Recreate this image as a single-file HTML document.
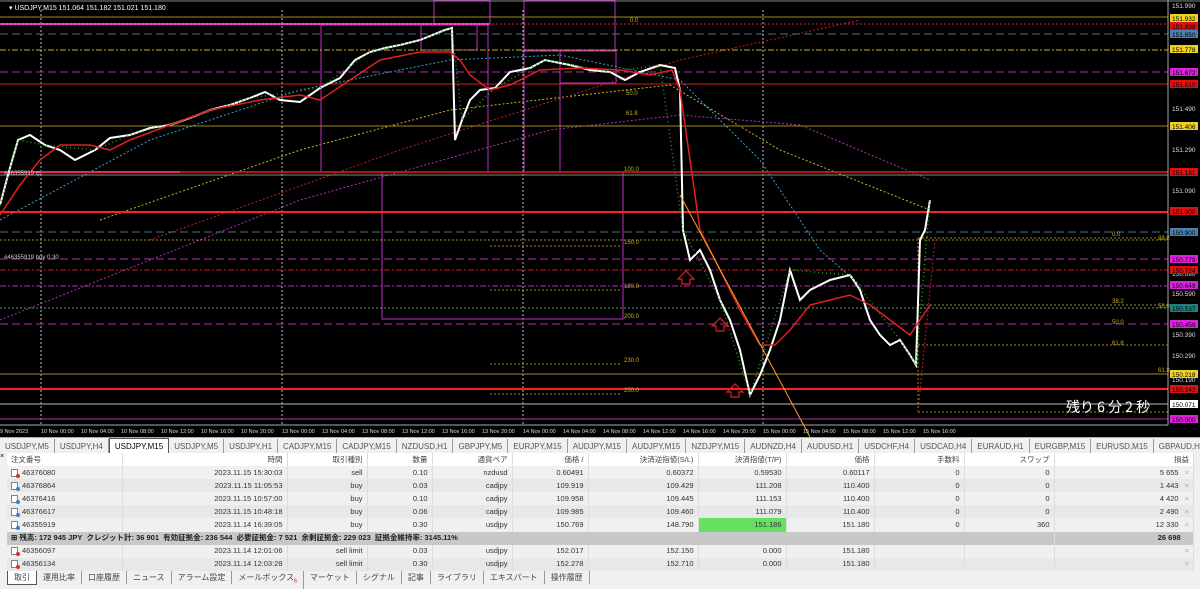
<!DOCTYPE html>
<html><head><meta charset="utf-8"><style>
*{margin:0;padding:0;box-sizing:border-box}
body{width:1200px;height:589px;overflow:hidden;background:#f0f0f0;font-family:"Liberation Sans","Noto Sans CJK JP",sans-serif;position:relative}
#chart{position:absolute;left:0;top:0;width:1200px;height:437px;background:#000}
.tabs{position:absolute;left:0;top:437px;width:1200px;height:16px;background:#f0f0f0;font-size:8px;color:#555;white-space:nowrap;border-top:1px solid #aaa;overflow:hidden}
.tabs span{display:inline-block;padding:2px 5px;border-right:1px solid #999;line-height:11px}
.tabs span.a{background:#fff;color:#000;border:1px solid #555;border-bottom:none}
table{position:absolute;left:7px;top:453px;width:1187px;border-collapse:collapse;font-size:7.5px;color:#333;table-layout:fixed}
td{height:13.1px;line-height:12px;padding:0 4px;text-align:right;border-right:1px solid #ddd;white-space:nowrap;overflow:hidden}
tr.g td{background:#e8e8e8}
tr.h td{background:#fff;color:#444}
tr.bal td{background:#c8c8c8;font-weight:bold;color:#222}
td.l{text-align:left}
.ic{display:inline-block;width:7px;height:8px;border:1px solid #789;background:#fff;vertical-align:middle;margin-right:4px;position:relative}
.ic:after{content:"";position:absolute;right:-3px;bottom:-2px;width:4px;height:4px;border-radius:50%;background:#c33}
.ic.b:after{background:#3a7fd0}
.x{color:#aaa;margin-left:6px}
.btabs{position:absolute;left:7px;top:571px;height:15px;font-size:8px;color:#444;white-space:nowrap;background:#f0f0f0}
.btabs span{display:inline-block;padding:1px 6px;border-right:1px solid #999;line-height:11px}
.btabs span.a{background:#fff;border:1px solid #555;border-top:none}
</style></head><body>
<div id="chart">
<svg width="1200" height="437" xmlns="http://www.w3.org/2000/svg" font-family="Liberation Sans, sans-serif">
<rect x="0" y="0" width="1200" height="437" fill="#000"/>
<g stroke="#bbb" stroke-dasharray="2,2" stroke-width="1">
<line x1="41" y1="10" x2="41" y2="425"/><line x1="282" y1="10" x2="282" y2="425"/><line x1="523" y1="10" x2="523" y2="425"/><line x1="763" y1="10" x2="763" y2="425"/>
</g>
<polyline points="0,220 150,140 300,90 450,60 560,55" fill="none" stroke="#3aa0d0" stroke-width="1" stroke-dasharray="2,2"/>
<polyline points="560,55 680,80 760,160 820,250 860,285" fill="none" stroke="#3aa0d0" stroke-width="1" stroke-dasharray="2,2"/>
<polyline points="100,220 300,150 450,110 670,85 780,150 930,210" fill="none" stroke="#c8b820" stroke-width="1" stroke-dasharray="2,2"/>
<polyline points="150,240 400,150 680,60 860,20" fill="none" stroke="#c02020" stroke-width="1" stroke-dasharray="2,2"/>
<polyline points="0,320 300,200 550,130 680,115 800,125 930,180" fill="none" stroke="#b030b0" stroke-width="1" stroke-dasharray="2,2"/>
<g fill="none" stroke="#c030c0" stroke-width="1">
<rect x="321" y="25" width="167" height="147"/><rect x="434" y="0" width="56" height="24"/><rect x="421" y="25" width="56" height="25"/>
<rect x="524" y="0" width="91" height="50"/><rect x="524" y="51" width="36" height="121"/><rect x="560" y="51" width="56" height="32"/>
<rect x="382" y="172" width="241" height="147"/>
</g>
<line x1="0" y1="24" x2="490" y2="24" stroke="#ff40ff" stroke-width="2"/>
<line x1="0" y1="172" x2="180" y2="172" stroke="#ff40ff" stroke-width="2"/>
<g fill="none">
<line x1="0" y1="17" x2="1168" y2="17" stroke="#a08a20"/>
<line x1="0" y1="24" x2="1168" y2="24" stroke="#e02020" stroke-dasharray="2,2"/>
<line x1="0" y1="34" x2="1168" y2="34" stroke="#4a7090" stroke-dasharray="8,4"/>
<line x1="0" y1="50" x2="1168" y2="50" stroke="#c8b020" stroke-dasharray="6,2,2,2"/>
<line x1="0" y1="72" x2="1168" y2="72" stroke="#b030b0" stroke-dasharray="8,4"/>
<line x1="0" y1="84" x2="1168" y2="84" stroke="#d02020"/>
<line x1="0" y1="126" x2="1168" y2="126" stroke="#a08a20"/>
<line x1="0" y1="172" x2="1168" y2="172" stroke="#e02020" stroke-width="1.5"/>
<line x1="0" y1="175" x2="1168" y2="175" stroke="#888"/>
<line x1="0" y1="212" x2="1168" y2="212" stroke="#ff2020" stroke-width="2"/>
<line x1="0" y1="232" x2="1168" y2="232" stroke="#4a7090" stroke-dasharray="8,4"/>
<line x1="0" y1="240" x2="1168" y2="240" stroke="#a08a20" stroke-dasharray="2,2"/>
<line x1="0" y1="259" x2="1168" y2="259" stroke="#b030b0" stroke-dasharray="8,4"/>
<line x1="0" y1="270" x2="1168" y2="270" stroke="#c02020" stroke-dasharray="6,2,2,2"/>
<line x1="0" y1="286" x2="1168" y2="286" stroke="#b030b0" stroke-dasharray="6,2,2,2"/>
<line x1="0" y1="308" x2="1168" y2="308" stroke="#50a080" stroke-dasharray="2,2"/>
<line x1="0" y1="324" x2="1168" y2="324" stroke="#b030b0" stroke-dasharray="8,4"/>
<line x1="0" y1="374" x2="1168" y2="374" stroke="#a08a20"/>
<line x1="0" y1="389" x2="1168" y2="389" stroke="#ff2020" stroke-width="2"/>
<line x1="0" y1="404" x2="1168" y2="404" stroke="#bbb"/>
<line x1="0" y1="419" x2="1168" y2="419" stroke="#b030b0"/>
</g>
<g font-size="6" fill="#c8b020">
<text x="630" y="22">0.0</text><text x="626" y="95">50.0</text><text x="626" y="115">61.8</text><text x="624" y="171">100.0</text>
<text x="624" y="244">150.0</text><text x="624" y="288">180.0</text><text x="624" y="318">200.0</text><text x="624" y="362">230.0</text><text x="624" y="392">250.0</text>
<text x="1112" y="236">0.0</text><text x="1158" y="240">38.2</text><text x="1112" y="303">38.2</text><text x="1158" y="308">50.0</text><text x="1112" y="324">50.0</text><text x="1112" y="345">61.8</text><text x="1158" y="372">61.8</text>
</g>
<g stroke="#a08a20" stroke-dasharray="2,2"><line x1="490" y1="246" x2="622" y2="246"/><line x1="490" y1="290" x2="622" y2="290"/><line x1="490" y1="364" x2="622" y2="364"/><line x1="490" y1="394" x2="622" y2="394"/><line x1="918" y1="238" x2="1168" y2="238"/><line x1="918" y1="305" x2="1168" y2="305"/><line x1="918" y1="345" x2="1168" y2="345"/><line x1="918" y1="412" x2="1168" y2="412"/></g>
<line x1="918" y1="238" x2="918" y2="412" stroke="#a08a20" stroke-dasharray="2,2"/>
<line x1="918" y1="412" x2="935" y2="240" stroke="#c02020" stroke-dasharray="2,2"/>
<polyline points="0,205 8,175 18,140 30,135 45,145 60,150 75,160 95,150 110,138 130,135 150,128 170,125 190,118 210,110 230,105 250,98 265,92 280,100 300,102 320,88 340,78 355,60 370,52 385,48 400,45 420,40 445,30 452,28 455,140 462,120 470,100 480,90 495,88 510,72 530,68 545,60 570,65 590,70 610,72 625,80 640,72 660,65 675,68 680,90 683,230 690,260 700,250 710,270 720,300 730,320 740,350 750,395 760,375 770,350 780,320 790,270 800,300 810,290 830,280 850,275 860,290 870,320 880,335 890,345 900,340 910,355 916,365 920,240 925,230 930,200" fill="none" stroke="#fff" stroke-width="2"/>
<polyline points="0,205 18,140 45,145 95,150 130,135 190,118 250,98 320,88 370,52 420,40 452,28 462,120 495,88 545,60 610,72 660,65 683,230 720,300 750,395 790,270 850,275 900,340 916,365 930,200" fill="none" stroke="#2a9a20" stroke-width="1.5" stroke-dasharray="1,3"/>
<polyline points="0,215 20,185 40,160 60,145 90,145 110,150 130,140 170,125 210,110 260,100 300,95 320,100 350,80 380,60 420,52 450,52 460,60 470,75 490,90 510,85 540,70 580,68 620,70 650,75 672,70 680,90 690,160 700,230 720,270 740,310 760,345 775,345 790,330 810,305 830,300 850,295 870,305 890,320 910,335 920,320 930,305" fill="none" stroke="#e02020" stroke-width="1.5"/>
<line x1="680" y1="195" x2="810" y2="437" stroke="#ffa020" stroke-width="1"/>
<g fill="none" stroke="#e02020" stroke-width="1.2">
<path d="M682,284 v-5 h-4 l8,-8 l8,8 h-4 v5 z"/><path d="M716,331 v-5 h-4 l8,-8 l8,8 h-4 v5 z"/><path d="M731,397 v-5 h-4 l8,-8 l8,8 h-4 v5 z"/>
</g>
<line x1="0" y1="1" x2="1200" y2="1" stroke="#888"/>
<text x="9" y="10" font-size="7" fill="#fff">▾ USDJPY,M15  151.064 151.182 151.021 151.180</text>
<text x="4" y="175" font-size="6" fill="#ccc">#46355919 tp</text>
<text x="4" y="259" font-size="6" fill="#ccc">#46355919 buy 0.30</text>
<text x="1066" y="412" font-size="14" fill="#fff" font-family="Noto Sans CJK JP, sans-serif">残り 6 分 2 秒</text>
<line x1="1168" y1="0" x2="1168" y2="425" stroke="#aaa"/>
<line x1="0" y1="425" x2="1168" y2="425" stroke="#aaa"/>
<g font-size="6.5" fill="#ddd">
<text x="1172" y="8">151.990</text><text x="1172" y="111">151.490</text><text x="1172" y="152">151.290</text><text x="1172" y="193">151.090</text>
<text x="1172" y="276">150.690</text><text x="1172" y="296">150.590</text><text x="1172" y="337">150.390</text><text x="1172" y="358">150.290</text><text x="1172" y="382">150.190</text>
</g>
<g font-size="6.5">
<rect x="1170" y="14" width="28" height="8" fill="#f0d020"/><text x="1172" y="21" fill="#000">151.932</text>
<rect x="1170" y="22" width="28" height="8" fill="#e01010"/><text x="1172" y="29" fill="#000">151.898</text>
<rect x="1170" y="30" width="28" height="8" fill="#4a80b0"/><text x="1172" y="37" fill="#000">151.850</text>
<rect x="1170" y="45" width="28" height="8" fill="#f0d020"/><text x="1172" y="52" fill="#000">151.778</text>
<rect x="1170" y="68" width="28" height="8" fill="#e020e0"/><text x="1172" y="75" fill="#000">151.672</text>
<rect x="1170" y="80" width="28" height="8" fill="#e01010"/><text x="1172" y="87" fill="#000">151.610</text>
<rect x="1170" y="122" width="28" height="8" fill="#f0d020"/><text x="1172" y="129" fill="#000">151.406</text>
<rect x="1170" y="168" width="28" height="8" fill="#e01010"/><text x="1172" y="175" fill="#000">151.181</text>
<rect x="1170" y="207" width="28" height="8" fill="#e01010"/><text x="1172" y="214" fill="#000">151.000</text>
<rect x="1170" y="228" width="28" height="8" fill="#4a80b0"/><text x="1172" y="235" fill="#000">150.900</text>
<rect x="1170" y="255" width="28" height="8" fill="#e020e0"/><text x="1172" y="262" fill="#000">150.779</text>
<rect x="1170" y="266" width="28" height="8" fill="#e01010"/><text x="1172" y="273" fill="#000">150.724</text>
<rect x="1170" y="281" width="28" height="8" fill="#e020e0"/><text x="1172" y="288" fill="#000">150.649</text>
<rect x="1170" y="304" width="28" height="8" fill="#208080"/><text x="1172" y="311" fill="#000">150.537</text>
<rect x="1170" y="320" width="28" height="8" fill="#e020e0"/><text x="1172" y="327" fill="#000">150.459</text>
<rect x="1170" y="370" width="28" height="8" fill="#f0d020"/><text x="1172" y="377" fill="#000">150.218</text>
<rect x="1170" y="385" width="28" height="8" fill="#e01010"/><text x="1172" y="392" fill="#000">150.142</text>
<rect x="1170" y="400" width="28" height="8" fill="#fff"/><text x="1172" y="407" fill="#000">150.071</text>
<rect x="1170" y="415" width="28" height="8" fill="#e020e0"/><text x="1172" y="422" fill="#000">150.000</text>
</g>
<g font-size="5.5" fill="#ddd">
<text x="0" y="433">9 Nov 2023</text><text x="41" y="433">10 Nov 00:00</text><text x="81" y="433">10 Nov 04:00</text><text x="121" y="433">10 Nov 08:00</text><text x="161" y="433">10 Nov 12:00</text><text x="201" y="433">10 Nov 16:00</text><text x="241" y="433">10 Nov 20:00</text><text x="282" y="433">13 Nov 00:00</text><text x="322" y="433">13 Nov 04:00</text><text x="362" y="433">13 Nov 08:00</text><text x="402" y="433">13 Nov 12:00</text><text x="442" y="433">13 Nov 16:00</text><text x="482" y="433">13 Nov 20:00</text><text x="523" y="433">14 Nov 00:00</text><text x="563" y="433">14 Nov 04:00</text><text x="603" y="433">14 Nov 08:00</text><text x="643" y="433">14 Nov 12:00</text><text x="683" y="433">14 Nov 16:00</text><text x="723" y="433">14 Nov 20:00</text><text x="763" y="433">15 Nov 00:00</text><text x="803" y="433">15 Nov 04:00</text><text x="843" y="433">15 Nov 08:00</text><text x="883" y="433">15 Nov 12:00</text><text x="923" y="433">15 Nov 16:00</text>
</g>
</svg>
</div>
<div class="tabs"><span>USDJPY,M5</span><span>USDJPY,H4</span><span class="a">USDJPY,M15</span><span>USDJPY,M5</span><span>USDJPY,H1</span><span>CADJPY,M15</span><span>CADJPY,M15</span><span>NZDUSD,H1</span><span>GBPJPY,M5</span><span>EURJPY,M15</span><span>AUDJPY,M15</span><span>AUDJPY,M15</span><span>NZDJPY,M15</span><span>AUDNZD,H4</span><span>AUDUSD,H1</span><span>USDCHF,H4</span><span>USDCAD,H4</span><span>EURAUD,H1</span><span>EURGBP,M15</span><span>EURUSD,M15</span><span>GBPAUD,H1</span><span>GBPUS ◂ ▸</span></div>
<div style="position:absolute;left:0;top:453px;width:7px;height:118px;background:#f0f0f0;font-size:7px">×</div>
<table>
<colgroup><col style="width:115px"><col style="width:165px"><col style="width:80px"><col style="width:65px"><col style="width:80px"><col style="width:76px"><col style="width:110px"><col style="width:88px"><col style="width:88px"><col style="width:90px"><col style="width:90px"><col></colgroup>
<tr class="h"><td class="l">注文番号</td><td>時間</td><td>取引種別</td><td>数量</td><td>通貨ペア</td><td>価格 /</td><td>決済逆指値(S/L)</td><td>決済指値(T/P)</td><td>価格</td><td>手数料</td><td>スワップ</td><td>損益</td></tr>
<tr><td class="l"><i class="ic"></i>46376080</td><td>2023.11.15 15:30:03</td><td>sell</td><td>0.10</td><td>nzdusd</td><td>0.60491</td><td>0.60372</td><td>0.59530</td><td>0.60117</td><td>0</td><td>0</td><td>5 655<span class="x">×</span></td></tr>
<tr class="g"><td class="l"><i class="ic b"></i>46376864</td><td>2023.11.15 11:05:53</td><td>buy</td><td>0.03</td><td>cadjpy</td><td>109.919</td><td>109.429</td><td>111.208</td><td>110.400</td><td>0</td><td>0</td><td>1 443<span class="x">×</span></td></tr>
<tr><td class="l"><i class="ic b"></i>46376416</td><td>2023.11.15 10:57:00</td><td>buy</td><td>0.10</td><td>cadjpy</td><td>109.958</td><td>109.445</td><td>111.153</td><td>110.400</td><td>0</td><td>0</td><td>4 420<span class="x">×</span></td></tr>
<tr class="g"><td class="l"><i class="ic b"></i>46376617</td><td>2023.11.15 10:48:18</td><td>buy</td><td>0.06</td><td>cadjpy</td><td>109.985</td><td>109.460</td><td>111.079</td><td>110.400</td><td>0</td><td>0</td><td>2 490<span class="x">×</span></td></tr>
<tr><td class="l"><i class="ic b"></i>46355919</td><td>2023.11.14 16:39:05</td><td>buy</td><td>0.30</td><td>usdjpy</td><td>150.769</td><td>148.790</td><td style="background:#66e060">151.186</td><td>151.180</td><td>0</td><td>360</td><td>12 330<span class="x">×</span></td></tr>
<tr class="bal"><td class="l" colspan="11" style="text-align:left">⊞ 残高: 172 945 JPY&nbsp; クレジット計: 36 901&nbsp; 有効証拠金: 236 544&nbsp; 必要証拠金: 7 521&nbsp; 余剰証拠金: 229 023&nbsp; 証拠金維持率: 3145.11%</td><td>26 698&nbsp;&nbsp;&nbsp;&nbsp;</td></tr>
<tr><td class="l"><i class="ic"></i>46356097</td><td>2023.11.14 12:01:06</td><td>sell limit</td><td>0.03</td><td>usdjpy</td><td>152.017</td><td>152.150</td><td>0.000</td><td>151.180</td><td></td><td></td><td><span class="x">×</span></td></tr>
<tr class="g"><td class="l"><i class="ic"></i>46356134</td><td>2023.11.14 12:03:28</td><td>sell limit</td><td>0.30</td><td>usdjpy</td><td>152.278</td><td>152.710</td><td>0.000</td><td>151.180</td><td></td><td></td><td><span class="x">×</span></td></tr>
</table>
<div class="btabs"><span class="a">取引</span><span>運用比率</span><span>口座履歴</span><span>ニュース</span><span>アラーム設定</span><span>メールボックス<sub style="color:#c00;font-size:5px">6</sub></span><span>マーケット</span><span>シグナル</span><span>記事</span><span>ライブラリ</span><span>エキスパート</span><span>操作履歴</span></div>
</body></html>
